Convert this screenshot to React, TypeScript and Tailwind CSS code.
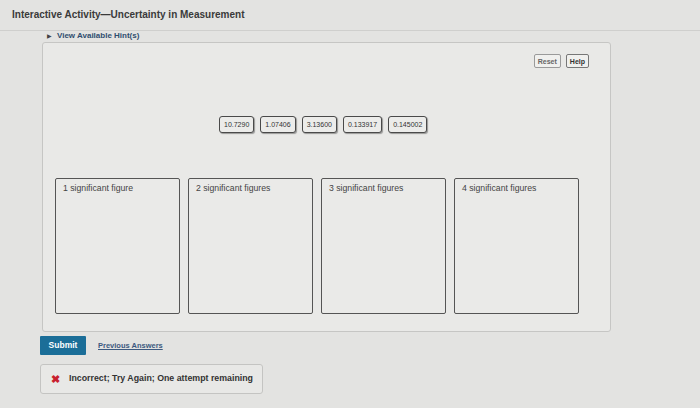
import React from 'react';

const chips = ['10.7290', '1.07406', '3.13600', '0.133917', '0.145002'];
const bins = ['1 significant figure', '2 significant figures', '3 significant figures', '4 significant figures'];

const App = () => {
  return (
    <div
      className="w-[700px] h-[408px] overflow-hidden bg-[#e3e3e1] text-[#333]"
      style={{ fontFamily: '"Liberation Sans", Arial, sans-serif' }}
    >
      {/* Header */}
      <div className="pl-[12px] pt-[8px] h-[31px] border-b border-[#cfcfcd]">
        <h1 className="text-[10px] font-bold leading-[14px] text-[#3a3a3a]">
          Interactive Activity—Uncertainty in Measurement
        </h1>
      </div>

      <div className="pl-[47px] flex items-center gap-[5px] h-[10px] leading-none">
        <span className="text-[6px] text-[#444]">▶</span>
        <span className="text-[8px] font-bold text-[#2f4d6e]">View Available Hint(s)</span>
      </div>

      {/* Activity panel */}
      <div className="ml-[42px] mt-[1px] w-[569px] h-[290px] border border-[#c6c6c4] rounded-[3px] bg-[#e9e9e7] pl-[12px] pr-[13px] pt-[11px] leading-none">
        <div className="flex justify-end gap-[5px] pr-[8px]">
          <button className="h-[14px] px-[3px] border border-[#9a9a9a] rounded-[2px] bg-[#f0f0ee] text-[7px] font-bold text-[#666] leading-none">
            Reset
          </button>
          <button className="h-[14px] px-[3px] border border-[#777] rounded-[2px] bg-[#f0f0ee] text-[7px] font-bold text-[#333] leading-none">
            Help
          </button>
        </div>

        <div className="flex gap-[6px] pl-[164px] mt-[48px]">
          {chips.map((c) => (
            <div
              key={c}
              className="h-[17px] px-[4px] flex items-center border-[1.5px] border-[#4a4a4a] rounded-[3px] bg-[#ececea] shadow-[1px_1px_1px_rgba(0,0,0,0.35)] text-[7px] text-[#333]"
            >
              {c}
            </div>
          ))}
        </div>

        <div className="flex gap-[8px] mt-[45px]">
          {bins.map((b) => (
            <div
              key={b}
              className="w-[125px] h-[136px] border-[1.5px] border-[#555] rounded-[2px] bg-[#eaeae8] px-[7px] pt-[5px] text-[8.7px] leading-none text-[#444]"
            >
              {b}
            </div>
          ))}
        </div>
      </div>

      {/* Submit row */}
      <div className="flex items-center ml-[40px] mt-[4px] gap-[12px]">
        <button className="w-[46px] h-[19px] bg-[#1b6e98] text-white text-[8.5px] font-bold rounded-[1px]">
          Submit
        </button>
        <span className="text-[7.5px] font-bold text-[#3d5a80] underline">Previous Answers</span>
      </div>

      {/* Feedback */}
      <div className="ml-[40px] mt-[9px] w-[223px] h-[30px] border border-[#c4c4c2] rounded-[3px] bg-[#e8e8e6] flex items-center pl-[10px] gap-[9px]">
        <span className="text-[#c8202e] text-[11px] font-bold leading-none">✖</span>
        <span className="text-[8.8px] font-bold text-[#333]">Incorrect; Try Again; One attempt remaining</span>
      </div>
    </div>
  );
};

export default App;
